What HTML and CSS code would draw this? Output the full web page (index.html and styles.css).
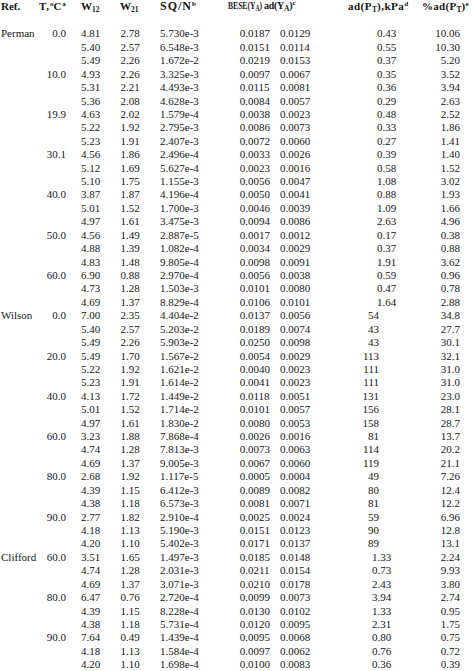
FILE: index.html
```html
<!DOCTYPE html>
<html lang="en">
<head>
<meta charset="utf-8">
<title>Table</title>
<link rel="stylesheet" href="styles.css">
</head>
<body>
<div class="sheet">
  <div class="row head">
    <div class="c h-ref">Ref.</div>
    <div class="c h-t">T,<span class="sup">o</span>C<span class="sup">a</span></div>
    <div class="c h-w12"><span class="bar">W</span><span class="sub">12</span></div>
    <div class="c h-w21"><span class="bar">W</span><span class="sub">21</span></div>
    <div class="c h-sq">SQ/N<span class="sup">b</span></div>
    <div class="c h-bese"><span class="squeeze">BESE(<span class="bar">Y</span><span class="sub">A</span>)</span></div>
    <div class="c h-ady">ad(<span class="bar">Y</span><span class="sub">A</span>)<span class="sup">c</span></div>
    <div class="c h-adp">ad(P<span class="sub">T</span>),kPa<span class="sup">d</span></div>
    <div class="c h-pct">%ad(P<span class="sub">T</span>)<span class="sup">e</span></div>
  </div>

  <div class="body">
    <div class="row"><div class="c ref">Perman</div><div class="c t">0.0</div><div class="c w12">4.81</div><div class="c w21">2.78</div><div class="c sq">5.730e-3</div><div class="c bese">0.0187</div><div class="c ady">0.0129</div><div class="c adp p">0.43</div><div class="c pct">10.06</div></div>
    <div class="row"><div class="c ref"></div><div class="c t"></div><div class="c w12">5.40</div><div class="c w21">2.57</div><div class="c sq">6.548e-3</div><div class="c bese">0.0151</div><div class="c ady">0.0114</div><div class="c adp p">0.55</div><div class="c pct">10.30</div></div>
    <div class="row"><div class="c ref"></div><div class="c t"></div><div class="c w12">5.49</div><div class="c w21">2.26</div><div class="c sq">1.672e-2</div><div class="c bese">0.0219</div><div class="c ady">0.0153</div><div class="c adp p">0.37</div><div class="c pct">5.20</div></div>
    <div class="row"><div class="c ref"></div><div class="c t">10.0</div><div class="c w12">4.93</div><div class="c w21">2.26</div><div class="c sq">3.325e-3</div><div class="c bese">0.0097</div><div class="c ady">0.0067</div><div class="c adp p">0.35</div><div class="c pct">3.52</div></div>
    <div class="row"><div class="c ref"></div><div class="c t"></div><div class="c w12">5.31</div><div class="c w21">2.21</div><div class="c sq">4.493e-3</div><div class="c bese">0.0115</div><div class="c ady">0.0081</div><div class="c adp p">0.36</div><div class="c pct">3.94</div></div>
    <div class="row"><div class="c ref"></div><div class="c t"></div><div class="c w12">5.36</div><div class="c w21">2.08</div><div class="c sq">4.628e-3</div><div class="c bese">0.0084</div><div class="c ady">0.0057</div><div class="c adp p">0.29</div><div class="c pct">2.63</div></div>
    <div class="row"><div class="c ref"></div><div class="c t">19.9</div><div class="c w12">4.63</div><div class="c w21">2.02</div><div class="c sq">1.579e-4</div><div class="c bese">0.0038</div><div class="c ady">0.0023</div><div class="c adp p">0.48</div><div class="c pct">2.52</div></div>
    <div class="row"><div class="c ref"></div><div class="c t"></div><div class="c w12">5.22</div><div class="c w21">1.92</div><div class="c sq">2.795e-3</div><div class="c bese">0.0086</div><div class="c ady">0.0073</div><div class="c adp p">0.33</div><div class="c pct">1.86</div></div>
    <div class="row"><div class="c ref"></div><div class="c t"></div><div class="c w12">5.23</div><div class="c w21">1.91</div><div class="c sq">2.407e-3</div><div class="c bese">0.0072</div><div class="c ady">0.0060</div><div class="c adp p">0.27</div><div class="c pct">1.41</div></div>
    <div class="row"><div class="c ref"></div><div class="c t">30.1</div><div class="c w12">4.56</div><div class="c w21">1.86</div><div class="c sq">2.496e-4</div><div class="c bese">0.0033</div><div class="c ady">0.0026</div><div class="c adp p">0.39</div><div class="c pct">1.40</div></div>
    <div class="row"><div class="c ref"></div><div class="c t"></div><div class="c w12">5.12</div><div class="c w21">1.69</div><div class="c sq">5.627e-4</div><div class="c bese">0.0023</div><div class="c ady">0.0016</div><div class="c adp p">0.58</div><div class="c pct">1.52</div></div>
    <div class="row"><div class="c ref"></div><div class="c t"></div><div class="c w12">5.10</div><div class="c w21">1.75</div><div class="c sq">1.155e-3</div><div class="c bese">0.0056</div><div class="c ady">0.0047</div><div class="c adp p">1.08</div><div class="c pct">3.02</div></div>
    <div class="row"><div class="c ref"></div><div class="c t">40.0</div><div class="c w12">3.87</div><div class="c w21">1.87</div><div class="c sq">4.196e-4</div><div class="c bese">0.0050</div><div class="c ady">0.0041</div><div class="c adp p">0.88</div><div class="c pct">1.93</div></div>
    <div class="row"><div class="c ref"></div><div class="c t"></div><div class="c w12">5.01</div><div class="c w21">1.52</div><div class="c sq">1.700e-3</div><div class="c bese">0.0046</div><div class="c ady">0.0039</div><div class="c adp p">1.09</div><div class="c pct">1.66</div></div>
    <div class="row"><div class="c ref"></div><div class="c t"></div><div class="c w12">4.97</div><div class="c w21">1.61</div><div class="c sq">3.475e-3</div><div class="c bese">0.0094</div><div class="c ady">0.0086</div><div class="c adp p">2.63</div><div class="c pct">4.96</div></div>
    <div class="row"><div class="c ref"></div><div class="c t">50.0</div><div class="c w12">4.56</div><div class="c w21">1.49</div><div class="c sq">2.887e-5</div><div class="c bese">0.0017</div><div class="c ady">0.0012</div><div class="c adp p">0.17</div><div class="c pct">0.38</div></div>
    <div class="row"><div class="c ref"></div><div class="c t"></div><div class="c w12">4.88</div><div class="c w21">1.39</div><div class="c sq">1.082e-4</div><div class="c bese">0.0034</div><div class="c ady">0.0029</div><div class="c adp p">0.37</div><div class="c pct">0.88</div></div>
    <div class="row"><div class="c ref"></div><div class="c t"></div><div class="c w12">4.83</div><div class="c w21">1.48</div><div class="c sq">9.805e-4</div><div class="c bese">0.0098</div><div class="c ady">0.0091</div><div class="c adp p">1.91</div><div class="c pct">3.62</div></div>
    <div class="row"><div class="c ref"></div><div class="c t">60.0</div><div class="c w12">6.90</div><div class="c w21">0.88</div><div class="c sq">2.970e-4</div><div class="c bese">0.0056</div><div class="c ady">0.0038</div><div class="c adp p">0.59</div><div class="c pct">0.96</div></div>
    <div class="row"><div class="c ref"></div><div class="c t"></div><div class="c w12">4.73</div><div class="c w21">1.28</div><div class="c sq">1.503e-3</div><div class="c bese">0.0101</div><div class="c ady">0.0080</div><div class="c adp p">0.47</div><div class="c pct">0.78</div></div>
    <div class="row"><div class="c ref"></div><div class="c t"></div><div class="c w12">4.69</div><div class="c w21">1.37</div><div class="c sq">8.829e-4</div><div class="c bese">0.0106</div><div class="c ady">0.0101</div><div class="c adp p">1.64</div><div class="c pct">2.88</div></div>

    <div class="row"><div class="c ref">Wilson</div><div class="c t">0.0</div><div class="c w12">7.00</div><div class="c w21">2.35</div><div class="c sq">4.404e-2</div><div class="c bese">0.0137</div><div class="c ady">0.0056</div><div class="c adp w">54</div><div class="c pct">34.8</div></div>
    <div class="row"><div class="c ref"></div><div class="c t"></div><div class="c w12">5.40</div><div class="c w21">2.57</div><div class="c sq">5.203e-2</div><div class="c bese">0.0189</div><div class="c ady">0.0074</div><div class="c adp w">43</div><div class="c pct">27.7</div></div>
    <div class="row"><div class="c ref"></div><div class="c t"></div><div class="c w12">5.49</div><div class="c w21">2.26</div><div class="c sq">5.903e-2</div><div class="c bese">0.0250</div><div class="c ady">0.0098</div><div class="c adp w">43</div><div class="c pct">30.1</div></div>
    <div class="row"><div class="c ref"></div><div class="c t">20.0</div><div class="c w12">5.49</div><div class="c w21">1.70</div><div class="c sq">1.567e-2</div><div class="c bese">0.0054</div><div class="c ady">0.0029</div><div class="c adp w">113</div><div class="c pct">32.1</div></div>
    <div class="row"><div class="c ref"></div><div class="c t"></div><div class="c w12">5.22</div><div class="c w21">1.92</div><div class="c sq">1.621e-2</div><div class="c bese">0.0040</div><div class="c ady">0.0023</div><div class="c adp w">111</div><div class="c pct">31.0</div></div>
    <div class="row"><div class="c ref"></div><div class="c t"></div><div class="c w12">5.23</div><div class="c w21">1.91</div><div class="c sq">1.614e-2</div><div class="c bese">0.0041</div><div class="c ady">0.0023</div><div class="c adp w">111</div><div class="c pct">31.0</div></div>
    <div class="row"><div class="c ref"></div><div class="c t">40.0</div><div class="c w12">4.13</div><div class="c w21">1.72</div><div class="c sq">1.449e-2</div><div class="c bese">0.0118</div><div class="c ady">0.0051</div><div class="c adp w">131</div><div class="c pct">23.0</div></div>
    <div class="row"><div class="c ref"></div><div class="c t"></div><div class="c w12">5.01</div><div class="c w21">1.52</div><div class="c sq">1.714e-2</div><div class="c bese">0.0101</div><div class="c ady">0.0057</div><div class="c adp w">156</div><div class="c pct">28.1</div></div>
    <div class="row"><div class="c ref"></div><div class="c t"></div><div class="c w12">4.97</div><div class="c w21">1.61</div><div class="c sq">1.830e-2</div><div class="c bese">0.0080</div><div class="c ady">0.0053</div><div class="c adp w">158</div><div class="c pct">28.7</div></div>
    <div class="row"><div class="c ref"></div><div class="c t">60.0</div><div class="c w12">3.23</div><div class="c w21">1.88</div><div class="c sq">7.868e-4</div><div class="c bese">0.0026</div><div class="c ady">0.0016</div><div class="c adp w">81</div><div class="c pct">13.7</div></div>
    <div class="row"><div class="c ref"></div><div class="c t"></div><div class="c w12">4.74</div><div class="c w21">1.28</div><div class="c sq">7.813e-3</div><div class="c bese">0.0073</div><div class="c ady">0.0063</div><div class="c adp w">114</div><div class="c pct">20.2</div></div>
    <div class="row"><div class="c ref"></div><div class="c t"></div><div class="c w12">4.69</div><div class="c w21">1.37</div><div class="c sq">9.005e-3</div><div class="c bese">0.0067</div><div class="c ady">0.0060</div><div class="c adp w">119</div><div class="c pct">21.1</div></div>
    <div class="row"><div class="c ref"></div><div class="c t">80.0</div><div class="c w12">2.68</div><div class="c w21">1.92</div><div class="c sq">1.117e-5</div><div class="c bese">0.0005</div><div class="c ady">0.0004</div><div class="c adp w">49</div><div class="c pct">7.26</div></div>
    <div class="row"><div class="c ref"></div><div class="c t"></div><div class="c w12">4.39</div><div class="c w21">1.15</div><div class="c sq">6.412e-3</div><div class="c bese">0.0089</div><div class="c ady">0.0082</div><div class="c adp w">80</div><div class="c pct">12.4</div></div>
    <div class="row"><div class="c ref"></div><div class="c t"></div><div class="c w12">4.38</div><div class="c w21">1.18</div><div class="c sq">6.573e-3</div><div class="c bese">0.0081</div><div class="c ady">0.0071</div><div class="c adp w">81</div><div class="c pct">12.2</div></div>
    <div class="row"><div class="c ref"></div><div class="c t">90.0</div><div class="c w12">2.77</div><div class="c w21">1.82</div><div class="c sq">2.910e-4</div><div class="c bese">0.0025</div><div class="c ady">0.0024</div><div class="c adp w">59</div><div class="c pct">6.96</div></div>
    <div class="row"><div class="c ref"></div><div class="c t"></div><div class="c w12">4.18</div><div class="c w21">1.13</div><div class="c sq">5.190e-3</div><div class="c bese">0.0151</div><div class="c ady">0.0123</div><div class="c adp w">90</div><div class="c pct">12.8</div></div>
    <div class="row"><div class="c ref"></div><div class="c t"></div><div class="c w12">4.20</div><div class="c w21">1.10</div><div class="c sq">5.402e-3</div><div class="c bese">0.0171</div><div class="c ady">0.0137</div><div class="c adp w">89</div><div class="c pct">13.1</div></div>

    <div class="row"><div class="c ref">Clifford</div><div class="c t">60.0</div><div class="c w12">3.51</div><div class="c w21">1.65</div><div class="c sq">1.497e-3</div><div class="c bese">0.0185</div><div class="c ady">0.0148</div><div class="c adp k">1.33</div><div class="c pct">2.24</div></div>
    <div class="row"><div class="c ref"></div><div class="c t"></div><div class="c w12">4.74</div><div class="c w21">1.28</div><div class="c sq">2.031e-3</div><div class="c bese">0.0211</div><div class="c ady">0.0154</div><div class="c adp k">0.73</div><div class="c pct">9.93</div></div>
    <div class="row"><div class="c ref"></div><div class="c t"></div><div class="c w12">4.69</div><div class="c w21">1.37</div><div class="c sq">3.071e-3</div><div class="c bese">0.0210</div><div class="c ady">0.0178</div><div class="c adp k">2.43</div><div class="c pct">3.80</div></div>
    <div class="row"><div class="c ref"></div><div class="c t">80.0</div><div class="c w12">6.47</div><div class="c w21">0.76</div><div class="c sq">2.720e-4</div><div class="c bese">0.0099</div><div class="c ady">0.0073</div><div class="c adp k">3.94</div><div class="c pct">2.74</div></div>
    <div class="row"><div class="c ref"></div><div class="c t"></div><div class="c w12">4.39</div><div class="c w21">1.15</div><div class="c sq">8.228e-4</div><div class="c bese">0.0130</div><div class="c ady">0.0102</div><div class="c adp k">1.33</div><div class="c pct">0.95</div></div>
    <div class="row"><div class="c ref"></div><div class="c t"></div><div class="c w12">4.38</div><div class="c w21">1.18</div><div class="c sq">5.731e-4</div><div class="c bese">0.0120</div><div class="c ady">0.0095</div><div class="c adp k">2.31</div><div class="c pct">1.75</div></div>
    <div class="row"><div class="c ref"></div><div class="c t">90.0</div><div class="c w12">7.64</div><div class="c w21">0.49</div><div class="c sq">1.439e-4</div><div class="c bese">0.0095</div><div class="c ady">0.0068</div><div class="c adp k">0.80</div><div class="c pct">0.75</div></div>
    <div class="row"><div class="c ref"></div><div class="c t"></div><div class="c w12">4.18</div><div class="c w21">1.13</div><div class="c sq">1.584e-4</div><div class="c bese">0.0097</div><div class="c ady">0.0062</div><div class="c adp k">0.76</div><div class="c pct">0.72</div></div>
    <div class="row"><div class="c ref"></div><div class="c t"></div><div class="c w12">4.20</div><div class="c w21">1.10</div><div class="c sq">1.698e-4</div><div class="c bese">0.0100</div><div class="c ady">0.0083</div><div class="c adp k">0.36</div><div class="c pct">0.39</div></div>
  </div>
</div>
</body>
</html>
```

FILE: styles.css
```css
html, body {
  margin: 0;
  padding: 0;
  background: #ffffff;
}

body {
  font-family: "Liberation Serif", "Times New Roman", serif;
  font-size: 11px;
  color: #161616;
}

.sheet {
  width: 474px;
}

.row {
  display: grid;
  grid-template-columns: 36px 40px 40px 39px 70px 38px 82px 75px 54px;
  height: 13.43px;
  line-height: 13.43px;
  white-space: nowrap;
}

.head {
  height: 12px;
  line-height: 12px;
  font-weight: bold;
  margin-bottom: 15.4px;
}

/* header cells */
.h-ref { padding-left: 1px; }
.h-t { padding-left: 3px; letter-spacing: 0.8px; }
.h-w12 { padding-left: 5px; }
.h-w21 { padding-left: 4px; }
.h-sq { padding-left: 5px; font-size: 12px; letter-spacing: 1px; }
.h-bese { padding-left: 3px; font-size: 10px; }
.h-ady { padding-left: 1px; letter-spacing: -0.3px; font-size: 10px; }
.h-adp { padding-left: 3px; letter-spacing: 0.5px; }
.h-pct { padding-left: 2px; letter-spacing: 0.3px; }

.squeeze {
  display: inline-block;
  transform: scaleX(0.76);
  transform-origin: 0 50%;
}

.bar {
  border-top: 1px solid #161616;
}

.sub {
  font-size: 7.5px;
  line-height: 0;
  vertical-align: -2px;
  letter-spacing: 0;
}

.sup {
  font-size: 7px;
  line-height: 0;
  vertical-align: 4px;
  letter-spacing: 0;
}

/* body cells */
.ref { padding-left: 1px; }
.t { text-align: right; padding-right: 10px; }
.w12 { padding-left: 5px; }
.w21 { padding-left: 4.5px; }
.sq { padding-left: 5px; }
.bese { padding-left: 14.7px; }
.ady { padding-left: 17px; }
.adp.p { padding-left: 32px; }
.adp.w { text-align: right; padding-right: 41px; }
.adp.k { padding-left: 27px; }
.pct { text-align: right; padding-right: 14px; }
```
